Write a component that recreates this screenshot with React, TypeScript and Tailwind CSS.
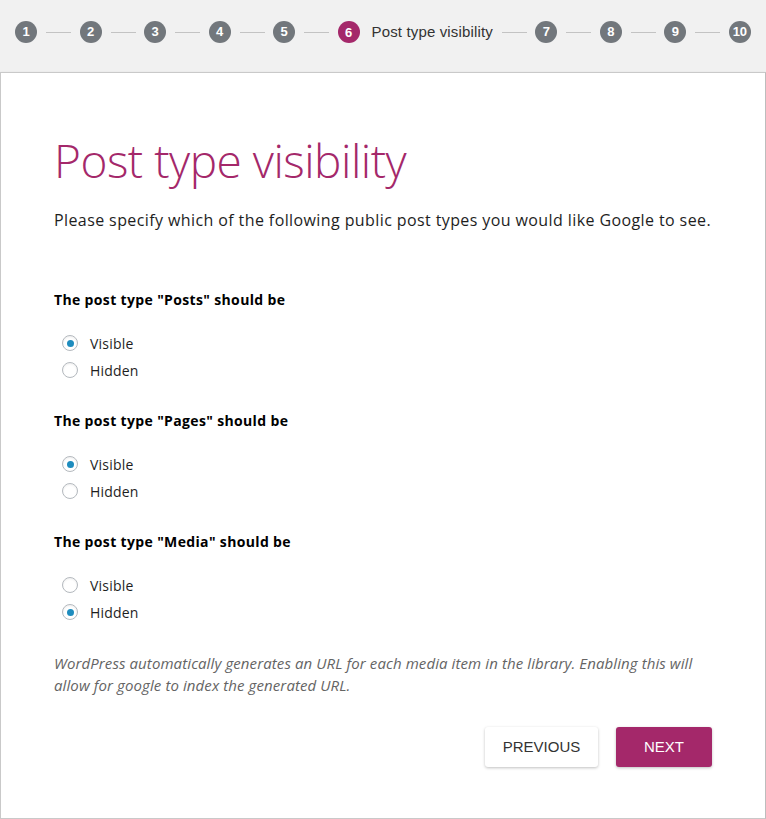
const steps = [1, 2, 3, 4, 5, 6, 7, 8, 9, 10];

function Stepper() {
  return (
    <div className="h-[72px] bg-[#f1f1f1] flex items-start pt-[21px] pl-[15px] font-['Liberation_Sans',Arial,sans-serif]">
      {steps.map((n, i) => (
        <div key={n} className="flex items-center">
          {i > 0 && <span className="ml-[9px] mr-[8.5px] h-px w-[25px] bg-[#c3c3c3]" />}
          <span
            className={
              "flex h-[22px] w-[22px] items-center justify-center rounded-full text-[13px] font-bold text-white " +
              (n === 6 ? "bg-[#a4286a]" : "bg-[#72777c]")
            }
          >
            {n}
          </span>
          {n === 6 && (
            <span className="ml-[12px] text-[15px] tracking-[0.15px] text-[#333]">Post type visibility</span>
          )}
        </div>
      ))}
    </div>
  );
}

function Radio({ label, checked }: { label: string; checked?: boolean }) {
  return (
    <label className="flex items-center h-[27px]">
      <span className="ml-[8px] flex h-[16px] w-[16px] items-center justify-center rounded-full border border-[#b4b9be] shadow-[inset_0_1px_2px_rgba(0,0,0,0.07)]">
        {checked && <span className="h-[7px] w-[7px] rounded-full bg-[#1e8cbe]" />}
      </span>
      <span className="ml-[12px] text-[14px] text-[#1e1e1e] tracking-[0.2px]">{label}</span>
    </label>
  );
}

function Group({ name, visible }: { name: string; visible: boolean }) {
  return (
    <fieldset className="mb-[26px]">
      <legend className="text-[14px] font-bold text-black mb-[20px] tracking-[0.35px]">
        The post type "{name}" should be
      </legend>
      <Radio label="Visible" checked={visible} />
      <Radio label="Hidden" checked={!visible} />
    </fieldset>
  );
}

export default function App() {
  return (
    <div className="min-h-[819px] bg-[#f1f1f1] font-['Open_Sans',sans-serif]">
      <Stepper />
      <main className="bg-white border border-[#c9c9c9] border-r-[#bdbdbd] shadow-[0_1px_3px_rgba(0,0,0,0.13)] min-h-[747px] px-[53px] pt-[58px] pb-[50px]">
        <h1 className="text-[46px] font-light leading-[1.3] text-[#a4286a] tracking-[-0.5px]">
          Post type visibility
        </h1>
        <p className="mt-[17px] text-[16px] text-[#1e1e1e] tracking-[0.4px]">
          Please specify which of the following public post types you would like Google to see.
        </p>
        <div className="mt-[57px]">
          <Group name="Posts" visible />
          <Group name="Pages" visible />
          <Group name="Media" visible={false} />
        </div>
        <p className="mt-[11px] text-[15px] italic leading-[22px] text-[#646464] tracking-[0.1px]">
          WordPress automatically generates an URL for each media item in the library. Enabling this will
          allow for google to index the generated URL.
        </p>
        <div className="mt-[31px] flex justify-end gap-[18px] font-['Liberation_Sans',Arial,sans-serif]">
          <button className="h-[40px] w-[113px] rounded-[3px] bg-white text-[15px] text-[#333] shadow-[0_1px_3px_rgba(0,0,0,0.25)]">
            PREVIOUS
          </button>
          <button className="h-[40px] w-[96px] rounded-[3px] bg-[#a4286a] text-[15px] text-white shadow-[0_1px_3px_rgba(0,0,0,0.25)]">
            NEXT
          </button>
        </div>
      </main>
    </div>
  );
}
